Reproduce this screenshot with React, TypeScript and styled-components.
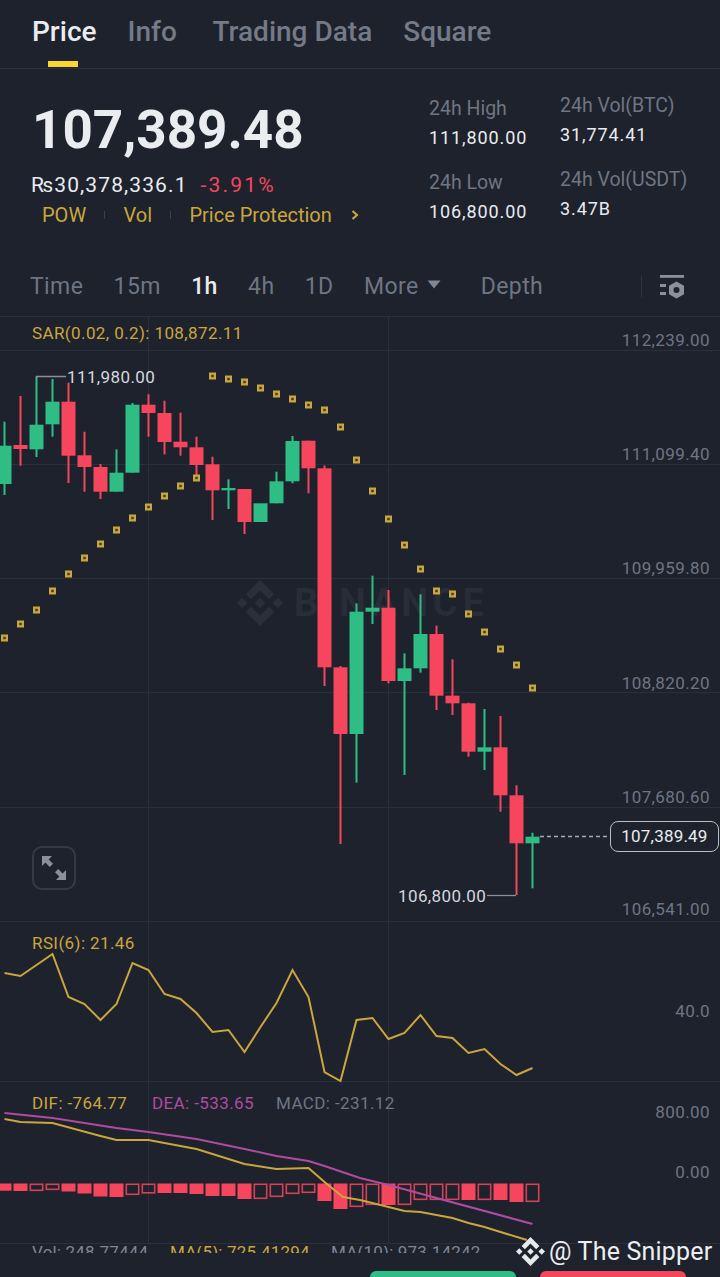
import styled, { createGlobalStyle } from "styled-components";

// wickTop, wickBottom, bodyTop, bodyBottom (page y), first candle centre at x=4.5, 16px step
const candleData: [number, number, number, number, "g" | "r"][] = [
  [421.7, 495, 445.7, 484, "g"],
  [396, 465.7, 445, 449, "r"],
  [376.7, 457, 424.7, 449.3, "g"],
  [379, 436.7, 401.7, 424.3, "g"],
  [382.7, 483, 401.7, 455.7, "r"],
  [431.7, 491.7, 455.3, 467, "r"],
  [464, 499, 467, 491.7, "r"],
  [449.3, 491.7, 472.7, 491.7, "g"],
  [403, 472.7, 404.7, 472.7, "g"],
  [394.3, 436.7, 404.7, 413, "r"],
  [400.7, 454.3, 413, 442, "r"],
  [412.7, 455.7, 441.7, 447.3, "r"],
  [436.7, 475, 447.3, 465, "r"],
  [456.7, 520, 464.3, 490.3, "r"],
  [479.3, 509, 488, 490.3, "g"],
  [489, 534, 489, 522, "r"],
  [507, 522, 503.3, 522, "g"],
  [471.7, 503.3, 481.3, 503.3, "g"],
  [436, 483.3, 441, 481.3, "g"],
  [440.7, 493.3, 440.7, 468.3, "r"],
  [465.5, 686, 468.3, 667.3, "r"],
  [666, 844, 667.3, 734, "r"],
  [603.3, 782.7, 611.7, 734, "g"],
  [575.7, 624, 607.7, 611.7, "g"],
  [590, 683.3, 607.7, 681, "r"],
  [653.3, 775, 668.3, 681, "g"],
  [594.3, 672.7, 634, 668.3, "g"],
  [625.7, 710, 634, 695.7, "r"],
  [659.3, 715, 695.7, 703.3, "r"],
  [702.7, 756.7, 703.3, 751.7, "r"],
  [709, 770, 747.3, 751.7, "g"],
  [716, 811.7, 747.3, 795.3, "r"],
  [785.3, 895, 795.3, 843.3, "r"],
  [832.7, 888.3, 836.7, 843.3, "g"],
];

const sarDots = [
  [4.5, 638], [20.5, 624], [36.5, 610], [52.5, 591], [68.5, 574], [84.5, 558], [100.5, 544],
  [116.5, 530], [132.5, 518], [148.5, 507], [164.5, 496], [180.5, 486], [196.5, 478],
  [212.5, 376], [228.5, 379], [244.5, 382], [260.5, 388], [276.5, 394], [292.5, 399],
  [308.5, 405], [324.5, 410], [340.5, 427], [356.5, 460], [372.5, 491], [388.5, 519],
  [404.5, 545], [420.5, 569], [436.5, 591], [452.5, 594], [468.5, 614], [484.5, 632],
  [500.5, 649], [516.5, 665], [532.5, 688],
];

const rsiPoints =
  "4.5,973 20.5,976 36.5,965 52.5,954 68.5,997 84.5,1004 100.5,1020 116.5,1004 132.5,963 148.5,970 164.5,994 180.5,999 196.5,1013 212.5,1032 228.5,1030 244.5,1052 260.5,1027 276.5,1003 292.5,970 308.5,997 324.5,1072 340.5,1081 356.5,1020 372.5,1018 388.5,1039 404.5,1033 420.5,1015 436.5,1036 452.5,1038 468.5,1053 484.5,1049 500.5,1064 516.5,1075 532.5,1068";
const deaPoints =
  "4.5,1113 52.5,1118 116.5,1128 148.5,1132 196.5,1139 244.5,1149 276.5,1156 308.5,1161 324.5,1166 360,1178 388.5,1185 532.5,1224";
const difPoints =
  "4.5,1119 20.5,1122 52.5,1123 100.5,1136 116.5,1140 148.5,1140 196.5,1149 244.5,1164 276.5,1169 308.5,1168 324.5,1182 343,1197 360,1200 388.5,1207 404.5,1211 420.5,1212 452.5,1218 468.5,1223 484.5,1227 500.5,1232 527,1240";

// bottom y, filled or hollow
const macdBars: [number, boolean][] = [
  [1190.7, true], [1191, true], [1191, false], [1190, false], [1191.5, true], [1193.5, true],
  [1196.5, true], [1197, true], [1195, false], [1193.5, false], [1193, true], [1193, true],
  [1194, true], [1196, true], [1196, true], [1199, true], [1199, false], [1197, false],
  [1194, false], [1193, false], [1201, true], [1209, true], [1207, false], [1205, false],
  [1205, true], [1205, false], [1200, false], [1200, false], [1200, false], [1200, true],
  [1200, false], [1200, true], [1202, true], [1202, false],
];

const gridRows = [350, 464, 578, 692, 807, 921, 1081];
const axisLabels: [number, string][] = [
  [340, "112,239.00"],
  [454, "111,099.40"],
  [568, "109,959.80"],
  [683, "108,820.20"],
  [797, "107,680.60"],
  [909, "106,541.00"],
  [1011, "40.0"],
  [1112, "800.00"],
  [1172, "0.00"],
];

const RED = "#f6465d";
const GREEN = "#2ebd85";
const GOLD = "#cba63c";
const BG = "#1d222d";

const BINANCE_LOGO =
  "M38.73 53.2l24.59-24.58 24.6 24.6 14.3-14.31L63.32 0 24.43 38.9zM0 63.31L14.3 49l14.31 14.31-14.31 14.3zM38.73 73.41l24.59 24.59 24.6-24.6 14.31 14.29-38.9 38.91-38.91-38.88zM98 63.31L112.3 49l14.3 14.3-14.3 14.32zM77.83 63.3L63.32 48.78 52.59 59.51l-1.24 1.23-2.54 2.54 14.51 14.52 14.51-14.5z";

export default function App() {
  return (
    <Page>
      <GlobalStyle />

      <Tabs>
        <Tab $active>Price</Tab>
        <Tab $minWidth={54}>Info</Tab>
        <Tab>Trading Data</Tab>
        <Tab>Square</Tab>
      </Tabs>

      <Summary>
        <PriceBlock>
          <LastPrice>107,389.48</LastPrice>
          <FiatRow>
            <span>₨30,378,336.1</span>
            <Change>-3.91%</Change>
          </FiatRow>
          <TagRow>
            <span>POW</span>
            <TagDivider />
            <span>Vol</span>
            <TagDivider />
            <span>Price Protection</span>
            <svg width="10" height="12" viewBox="0 0 10 12">
              <polyline points="2.5,2 7,6 2.5,10" fill="none" stroke={GOLD} strokeWidth="2.2" />
            </svg>
          </TagRow>
        </PriceBlock>

        <StatColumn $top={28} $width={131}>
          <StatGroup>
            <StatLabel>24h High</StatLabel>
            <StatValue>111,800.00</StatValue>
          </StatGroup>
          <StatGroup>
            <StatLabel>24h Low</StatLabel>
            <StatValue>106,800.00</StatValue>
          </StatGroup>
        </StatColumn>
        <StatColumn $top={25} $width={160}>
          <StatGroup>
            <StatLabel>24h Vol(BTC)</StatLabel>
            <StatValue>31,774.41</StatValue>
          </StatGroup>
          <StatGroup>
            <StatLabel>24h Vol(USDT)</StatLabel>
            <StatValue>3.47B</StatValue>
          </StatGroup>
        </StatColumn>
      </Summary>

      <Toolbar>
        <Interval>Time</Interval>
        <Interval>15m</Interval>
        <Interval $active>1h</Interval>
        <Interval>4h</Interval>
        <Interval>1D</Interval>
        <Interval>
          More
          <svg width="14" height="9" viewBox="0 0 14 9">
            <path d="M0.5 0.5h13L7 8.5z" fill="#7f8694" />
          </svg>
        </Interval>
        <DepthTab>Depth</DepthTab>
        <ToolbarDivider />
        <svg width="25" height="24" viewBox="0 0 25 24">
          <g fill="#8b909c">
            <rect x="0" y="0" width="24" height="2.8" />
            <rect x="0" y="9" width="6" height="3" />
            <rect x="0" y="17" width="6" height="3" />
            <path
              fillRule="evenodd"
              d="M16.5 6.5l7.5 4.3v8.4l-7.5 4.3-7.5-4.3v-8.4zM16.5 12a3 3 0 1 0 0 6 3 3 0 1 0 0-6z"
            />
          </g>
        </svg>
      </Toolbar>

      <ChartArea>
        <WatermarkLogo width="46" height="46" viewBox="0 0 126.61 126.61">
          <path d={BINANCE_LOGO} fill="#2a2f3a" />
        </WatermarkLogo>
        <WatermarkText>BINANCE</WatermarkText>

        <ChartSvg viewBox="0 317 720 926" width="720" height="926">
          {gridRows.map((y) => (
            <rect key={y} x="0" y={y} width="720" height="1" fill="#2a2f3a" />
          ))}
          <rect x="148" y="317" width="1" height="926" fill="#2a2f3a" />
          <rect x="388" y="317" width="1" height="926" fill="#2a2f3a" />

          {candleData.map((c, i) => {
            const x = 4.5 + i * 16;
            const fill = c[4] === "g" ? GREEN : RED;
            return (
              <g key={i} fill={fill}>
                <rect x={x - 1} y={c[0]} width="2" height={c[1] - c[0]} />
                <rect x={x - 7} y={c[2]} width="14" height={c[3] - c[2]} />
              </g>
            );
          })}

          {sarDots.map(([x, y]) => (
            <g key={x}>
              <rect x={x - 3.5} y={y - 3.5} width="7" height="7" fill={GOLD} />
              <rect x={x - 1.2} y={y - 1.2} width="2.4" height="2.4" fill="#3a3626" />
            </g>
          ))}

          <polyline points="36.5,378 36.5,376.5 66,376.5" fill="none" stroke="#8b909c" strokeWidth="1.3" />
          <line x1="487" y1="895.5" x2="516" y2="895.5" stroke="#8b909c" strokeWidth="1.3" />
          <line x1="540" y1="836.5" x2="608" y2="836.5" stroke="#a6abb5" strokeWidth="1.4" strokeDasharray="4 3" />

          <polyline points={rsiPoints} fill="none" stroke={GOLD} strokeWidth="2" />

          {macdBars.map(([bottom, filled], i) => {
            const x = 4.5 + i * 16;
            return filled ? (
              <rect key={i} x={x - 7} y="1183.5" width="14" height={bottom - 1183.5} fill={RED} />
            ) : (
              <rect
                key={i}
                x={x - 6.2}
                y="1184.3"
                width="12.4"
                height={bottom - 1185}
                fill="none"
                stroke={RED}
                strokeOpacity="0.85"
                strokeWidth="1.6"
              />
            );
          })}
          <polyline points={deaPoints} fill="none" stroke="#b14ba0" strokeWidth="2" />
          <polyline points={difPoints} fill="none" stroke={GOLD} strokeWidth="2" />
        </ChartSvg>

        <IndicatorLabel $y={333} $x={32}>SAR(0.02, 0.2): 108,872.11</IndicatorLabel>
        <IndicatorLabel $y={943} $x={32}>RSI(6): 21.46</IndicatorLabel>
        <IndicatorLabel $y={1103} $x={32}>DIF: -764.77</IndicatorLabel>
        <IndicatorLabel $y={1103} $x={152} $color="#b14ba0">DEA: -533.65</IndicatorLabel>
        <IndicatorLabel $y={1103} $x={276} $color="#6f7583">MACD: -231.12</IndicatorLabel>

        <PeakLabel $y={377} $x={67}>111,980.00</PeakLabel>
        <PeakLabel $y={896} $x={398}>106,800.00</PeakLabel>

        {axisLabels.map(([y, text]) => (
          <AxisLabel key={text} $y={y}>{text}</AxisLabel>
        ))}

        <CurrentPrice>107,389.49</CurrentPrice>

        <ExpandButton>
          <svg width="28" height="28" viewBox="0 0 28 28">
            <path
              d="M2 2h10l-3.4 3.4 4.4 4.4-3.2 3.2-4.4-4.4L2 12zM26 26H16l3.4-3.4-4.4-4.4 3.2-3.2 4.4 4.4L26 16z"
              fill="#8b909c"
            />
          </svg>
        </ExpandButton>
      </ChartArea>

      <VolumeStrip>
        <VolumeClip>
          <VolText $x={32} $color="#7f8694">Vol: 248.77444</VolText>
          <VolText $x={170} $color={GOLD}>MA(5): 725.41294</VolText>
          <VolText $x={331} $color="#7f8694">MA(10): 973.14242</VolText>
        </VolumeClip>
        <TradeButtons>
          <TradeButton $color={GREEN} />
          <TradeButton $color={RED} />
        </TradeButtons>
      </VolumeStrip>

      <CreditMark>
        <svg width="29" height="29" viewBox="0 0 126.61 126.61">
          <path d={BINANCE_LOGO} fill="#e8e9ec" />
        </svg>
        <span>@ The Snipper</span>
      </CreditMark>
    </Page>
  );
}

const GlobalStyle = createGlobalStyle`
  html, body {
    margin: 0;
    padding: 0;
    background: ${BG};
  }
  * {
    box-sizing: border-box;
  }
`;

const Page = styled.div`
  position: relative;
  width: 720px;
  height: 1277px;
  overflow: hidden;
  display: flex;
  flex-direction: column;
  background: ${BG};
  font-family: Roboto, "Liberation Sans", "DejaVu Sans", sans-serif;
`;

const Tabs = styled.div`
  flex: none;
  display: flex;
  gap: 31px;
  height: 69px;
  padding: 13px 0 0 32px;
  border-bottom: 1px solid #2c313c;
`;

const Tab = styled.div<{ $active?: boolean; $minWidth?: number }>`
  position: relative;
  height: 55px;
  min-width: ${(props) => props.$minWidth ?? 0}px;
  font-size: 28px;
  line-height: 38px;
  font-weight: 500;
  color: ${(props) => (props.$active ? "#eaecef" : "#747a87")};

  &::after {
    content: "";
    display: ${(props) => (props.$active ? "block" : "none")};
    position: absolute;
    left: 16px;
    bottom: 1px;
    width: 30px;
    height: 6px;
    background: #fcd535;
  }
`;

const Summary = styled.div`
  flex: none;
  display: flex;
  height: 200px;
`;

const PriceBlock = styled.div`
  width: 429px;
  padding: 31px 0 0 31px;
`;

const LastPrice = styled.div`
  height: 60px;
  padding-left: 1px;
  font-size: 53px;
  line-height: 60px;
  font-weight: 700;
  color: #eaecef;
`;

const FiatRow = styled.div`
  display: flex;
  gap: 13px;
  margin-top: 13px;
  font-size: 21px;
  line-height: 24px;
  letter-spacing: 1.1px;
  color: #eaecef;
`;

const Change = styled.span`
  letter-spacing: 2.2px;
  color: ${RED};
`;

const TagRow = styled.div`
  display: flex;
  align-items: center;
  gap: 18.2px;
  margin-top: 6px;
  padding-left: 11px;
  font-size: 20px;
  line-height: 24px;
  color: ${GOLD};
`;

const TagDivider = styled.i`
  width: 1px;
  height: 8px;
  background: #3a3f4a;
`;

const StatColumn = styled.div<{ $top: number; $width: number }>`
  width: ${(props) => props.$width}px;
  padding-top: ${(props) => props.$top}px;
  display: flex;
  flex-direction: column;
  gap: 21px;
`;

const StatGroup = styled.div`
  display: flex;
  flex-direction: column;
  gap: 5px;
`;

const StatLabel = styled.div`
  font-size: 19.5px;
  line-height: 24px;
  color: #6f7583;
  white-space: nowrap;
`;

const StatValue = styled.div`
  font-size: 18px;
  line-height: 24px;
  letter-spacing: 0.9px;
  color: #eaecef;
`;

const Toolbar = styled.div`
  flex: none;
  display: flex;
  align-items: center;
  height: 48px;
  padding: 0 0 12px 30px;
  gap: 30.3px;
  border-bottom: 1px solid #2a2f3a;
`;

const Interval = styled.div<{ $active?: boolean }>`
  display: flex;
  align-items: center;
  gap: 9px;
  font-size: 23px;
  line-height: 28px;
  letter-spacing: 0.4px;
  font-weight: ${(props) => (props.$active ? 500 : 400)};
  color: ${(props) => (props.$active ? "#eaecef" : "#6f7583")};

  & > svg {
    margin-top: -4px;
  }
`;

const DepthTab = styled(Interval)`
  margin-left: 9px;
`;

const ToolbarDivider = styled.i`
  width: 1px;
  height: 21px;
  margin-left: 68px;
  margin-right: -12.5px;
  background: #2f3440;
`;

const ChartArea = styled.div`
  position: relative;
  flex: none;
  width: 720px;
  height: 926px;
`;

const ChartSvg = styled.svg`
  position: relative;
  z-index: 1;
  display: block;
`;

const WatermarkLogo = styled.svg`
  position: absolute;
  left: 237px;
  top: 263px;
`;

const WatermarkText = styled.div`
  position: absolute;
  left: 294px;
  top: 264px;
  font-size: 38px;
  line-height: 44px;
  font-weight: 700;
  letter-spacing: 4.8px;
  color: #282d38;
`;

const IndicatorLabel = styled.div<{ $x: number; $y: number; $color?: string }>`
  position: absolute;
  z-index: 2;
  left: ${(props) => props.$x}px;
  top: ${(props) => props.$y - 317}px;
  transform: translateY(-50%);
  font-size: 17px;
  line-height: 20px;
  letter-spacing: 0.4px;
  color: ${(props) => props.$color ?? GOLD};
  white-space: nowrap;
`;

const PeakLabel = styled.div<{ $x: number; $y: number }>`
  position: absolute;
  z-index: 2;
  left: ${(props) => props.$x}px;
  top: ${(props) => props.$y - 317}px;
  transform: translateY(-50%);
  font-size: 17px;
  line-height: 20px;
  letter-spacing: 0.4px;
  color: #d5d8dd;
`;

const AxisLabel = styled.div<{ $y: number }>`
  position: absolute;
  z-index: 2;
  right: 10px;
  top: ${(props) => props.$y - 317}px;
  transform: translateY(-50%);
  font-size: 17px;
  line-height: 20px;
  letter-spacing: 0.4px;
  color: #6f7583;
`;

const CurrentPrice = styled.div`
  position: absolute;
  z-index: 2;
  left: 610px;
  top: 504px;
  width: 109px;
  height: 31px;
  border: 1.5px solid #b9bdc5;
  border-radius: 8px;
  background: ${BG};
  font-size: 17px;
  line-height: 28px;
  letter-spacing: 0.2px;
  text-align: center;
  color: #eaecef;
`;

const ExpandButton = styled.div`
  position: absolute;
  z-index: 2;
  left: 32px;
  top: 529px;
  width: 44px;
  height: 44px;
  display: flex;
  align-items: center;
  justify-content: center;
  border: 2px solid #353a45;
  border-radius: 10px;
`;

const VolumeStrip = styled.div`
  flex: none;
  height: 34px;
  display: flex;
  flex-direction: column;
  border-top: 1px solid #2a2f3a;
`;

const VolumeClip = styled.div`
  position: relative;
  flex: none;
  height: 7px;
  margin-top: 2px;
  overflow: hidden;
`;

const VolText = styled.span<{ $x: number; $color: string }>`
  position: absolute;
  left: ${(props) => props.$x}px;
  top: -4px;
  font-size: 17px;
  line-height: 20px;
  letter-spacing: 0.2px;
  color: ${(props) => props.$color};
  white-space: nowrap;
`;

const TradeButtons = styled.div`
  flex: none;
  display: flex;
  gap: 24px;
  margin-top: 18px;
  padding-left: 370px;
`;

const TradeButton = styled.div<{ $color: string }>`
  width: 146px;
  height: 6px;
  border-radius: 12px 12px 0 0;
  background: ${(props) => props.$color};
`;

const CreditMark = styled.div`
  position: absolute;
  z-index: 3;
  left: 516px;
  top: 1236px;
  display: flex;
  align-items: center;
  gap: 4px;
  height: 30px;
  font-size: 25px;
  letter-spacing: 0.2px;
  color: #eceef1;
  white-space: nowrap;
`;
